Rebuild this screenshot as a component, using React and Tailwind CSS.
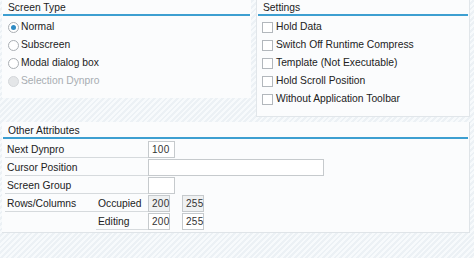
import React from "react";

const font = { fontFamily: '"Liberation Sans", Arial, sans-serif' };

const Radio = ({ label, checked, disabled }) => (
  <div className="flex h-[18px] items-center gap-[2px] pl-[6px]">
    <span
      className={`flex h-[11px] w-[11px] items-center justify-center rounded-full border ${
        disabled ? "border-[#d4d7da] bg-[#e4e6e8]" : "border-[#a9aeb3] bg-white"
      }`}
    >
      {checked && <span className="h-[5px] w-[5px] rounded-full bg-[#2f8bc4]" />}
    </span>
    <span className={disabled ? "text-[#a8adb2]" : "text-[#222]"}>{label}</span>
  </div>
);

const Check = ({ label }) => (
  <div className="flex h-[18px] items-center gap-[3px] pl-[5px]">
    <span className="h-[11px] w-[11px] border border-[#b2b7bc] bg-white" />
    <span className="text-[#222]">{label}</span>
  </div>
);

const Header = ({ title }) => (
  <div className="mx-[1px] h-[15px] border-b-2 border-[#3d9fd1] pl-[5px] leading-[13px] text-[#222]">
    {title}
  </div>
);

const Input = ({ value, width, disabled }) => (
  <div
    className={`h-[17px] border border-[#c6cacd] pl-[3px] text-[10px] leading-[15px] tracking-[0.3px] text-[#333] ${
      disabled ? "bg-[#eff1f2]" : "bg-white"
    } ${width}`}
  >
    {value}
  </div>
);

const Label = ({ text, width }) => (
  <div className={`h-[17px] border-b border-[#d6dadd] pl-[2px] leading-[17px] text-[#222] ${width}`}>
    {text}
  </div>
);

export default function App() {
  return (
    <div
      style={font}
      className="h-[258px] w-[474px] overflow-hidden bg-[#edf2f6] bg-[repeating-linear-gradient(135deg,#f7fafc_0px,#f7fafc_2px,#ecf1f5_2px,#ecf1f5_4px)] text-[10.3px]"
    >
      <div className="flex items-start">
        <div className="ml-[2px] h-[98px] w-[249px] bg-[#fbfcfd] pt-[1px]">
          <Header title="Screen Type" />
          <div className="pt-[2px]">
            <Radio label="Normal" checked />
            <Radio label="Subscreen" />
            <Radio label="Modal dialog box" />
            <Radio label="Selection Dynpro" disabled />
          </div>
        </div>
        <div className="ml-[5px] h-[117px] w-[214px] border-r border-b border-l border-[#e1e6ea] bg-[#fbfcfd] pt-[1px]">
          <Header title="Settings" />
          <div className="pt-[2px]">
            <Check label="Hold Data" />
            <Check label="Switch Off Runtime Compress" />
            <Check label="Template (Not Executable)" />
            <Check label="Hold Scroll Position" />
            <Check label="Without Application Toolbar" />
          </div>
        </div>
      </div>

      <div className="mt-[5px] ml-[2px] h-[111px] w-[468px] border-r border-b border-[#dfe4e8] bg-[#fbfcfd] pt-[2px]">
        <Header title="Other Attributes" />
        <div className="flex flex-col gap-[1px] pt-[2px] pl-[3px]">
          <div className="flex items-center">
            <Label text="Next Dynpro" width="w-[143px]" />
            <Input value="100" width="w-[27px]" />
          </div>
          <div className="flex items-center">
            <Label text="Cursor Position" width="w-[143px]" />
            <Input value="" width="w-[176px]" />
          </div>
          <div className="flex items-center">
            <Label text="Screen Group" width="w-[143px]" />
            <Input value="" width="w-[27px]" />
          </div>
          <div className="flex items-center">
            <Label text="Rows/Columns" width="w-[91px]" />
            <Label text="Occupied" width="w-[52px]" />
            <Input value="200" width="w-[22px]" disabled />
            <div className="w-[12px]" />
            <Input value="255" width="w-[22px]" disabled />
          </div>
          <div className="flex items-center">
            <div className="w-[91px]" />
            <Label text="Editing" width="w-[52px]" />
            <Input value="200" width="w-[22px]" />
            <div className="w-[12px]" />
            <Input value="255" width="w-[22px]" />
          </div>
        </div>
      </div>
    </div>
  );
}
